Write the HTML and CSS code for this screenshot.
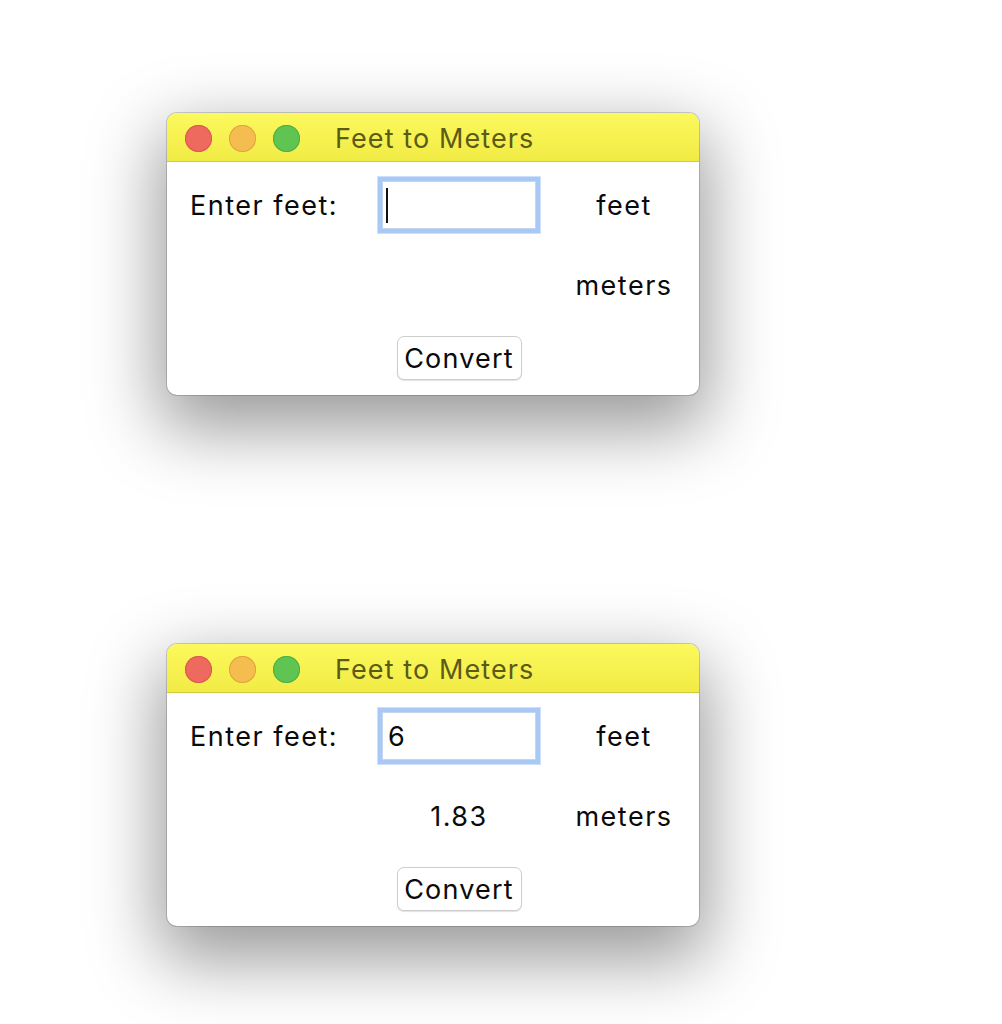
FILE: index.html
```html
<!DOCTYPE html>
<html lang="en">
<head>
<meta charset="utf-8">
<title>Feet to Meters</title>
<link rel="stylesheet" href="styles.css">
</head>
<body>
<main class="desk">
  <section class="window">
    <header class="titlebar">
      <div class="lights">
        <span class="light close"></span>
        <span class="light min"></span>
        <span class="light max"></span>
      </div>
      <h1 class="title">Feet to Meters</h1>
    </header>
    <div class="content">
      <div class="label">Enter feet:</div>
      <div class="entry"><span class="caret"></span></div>
      <div class="unit">feet</div>
      <div class="result"></div>
      <div class="unit">meters</div>
      <button class="btn">Convert</button>
    </div>
  </section>

  <section class="window">
    <header class="titlebar">
      <div class="lights">
        <span class="light close"></span>
        <span class="light min"></span>
        <span class="light max"></span>
      </div>
      <h1 class="title">Feet to Meters</h1>
    </header>
    <div class="content">
      <div class="label">Enter feet:</div>
      <div class="entry"><span class="entry-text">6</span></div>
      <div class="unit">feet</div>
      <div class="result">1.83</div>
      <div class="unit">meters</div>
      <button class="btn">Convert</button>
    </div>
  </section>
</main>
</body>
</html>
```

FILE: styles.css
```css
* { box-sizing: border-box; }

html, body {
  margin: 0;
  padding: 0;
  background: #ffffff;
}

body {
  font-family: Inter, "Liberation Sans", Arial, sans-serif;
  color: #0a0a0a;
}

.desk {
  display: flex;
  flex-direction: column;
  align-items: flex-start;
  gap: 249px;
  min-height: 1024px;
  padding: 113px 0 0 167px;
}

.window {
  width: 532px;
  height: 282px;
  flex: none;
  background: #ffffff;
  border-radius: 10px;
  overflow: hidden;
  box-shadow:
    0 0 0 1px rgba(0, 0, 0, 0.17),
    0 26px 70px 8px rgba(0, 0, 0, 0.40);
}

.titlebar {
  height: 49px;
  display: flex;
  align-items: center;
  padding: 3px 0 0 18px;
  background: linear-gradient(#fcf95d, #f1eb45);
  border-bottom: 1px solid #cfca3e;
}

.lights {
  display: flex;
  gap: 17px;
}

.light {
  width: 27px;
  height: 27px;
  border-radius: 50%;
  display: block;
}

.light.close { background: #ee6a5e; box-shadow: inset 0 0 0 1px #d95a4e; }
.light.min   { background: #f5bd4f; box-shadow: inset 0 0 0 1px #dea43c; }
.light.max   { background: #60c453; box-shadow: inset 0 0 0 1px #4fae42; }

.title {
  margin: 0 0 0 35px;
  font-size: 27px;
  font-weight: 400;
  letter-spacing: 1.1px;
  color: #5b5a17;
}

.content {
  display: grid;
  grid-template-columns: 187px 164px 1fr;
  grid-template-rows: 58px 54px 44px;
  row-gap: 24px;
  padding: 14px 0 15px 23px;
  font-size: 27px;
  letter-spacing: 1.5px;
}

.label {
  align-self: center;
}

.entry {
  display: flex;
  align-items: center;
  margin: 1px;
  padding-left: 4px;
  border: 4px solid #a8c8f5;
  box-shadow:
    0 0 0 1px rgba(168, 200, 245, 0.55),
    inset 0 0 0 1px rgba(110, 150, 210, 0.40);
  background: #ffffff;
}

.caret {
  display: block;
  width: 2px;
  height: 35px;
  background: #111111;
}

.entry-text {
  padding-left: 2px;
}

.unit {
  align-self: center;
  justify-self: center;
  padding-left: 8px;
}

.result {
  align-self: center;
  justify-self: center;
  grid-column: 2;
}

.btn {
  grid-column: 2;
  justify-self: center;
  width: 125px;
  height: 44px;
  padding: 0;
  font: inherit;
  letter-spacing: 1.2px;
  color: #0a0a0a;
  background: #ffffff;
  border: 1px solid #cdcdcd;
  border-radius: 7px;
  box-shadow: 0 1px 1px rgba(0, 0, 0, 0.12);
}
```
